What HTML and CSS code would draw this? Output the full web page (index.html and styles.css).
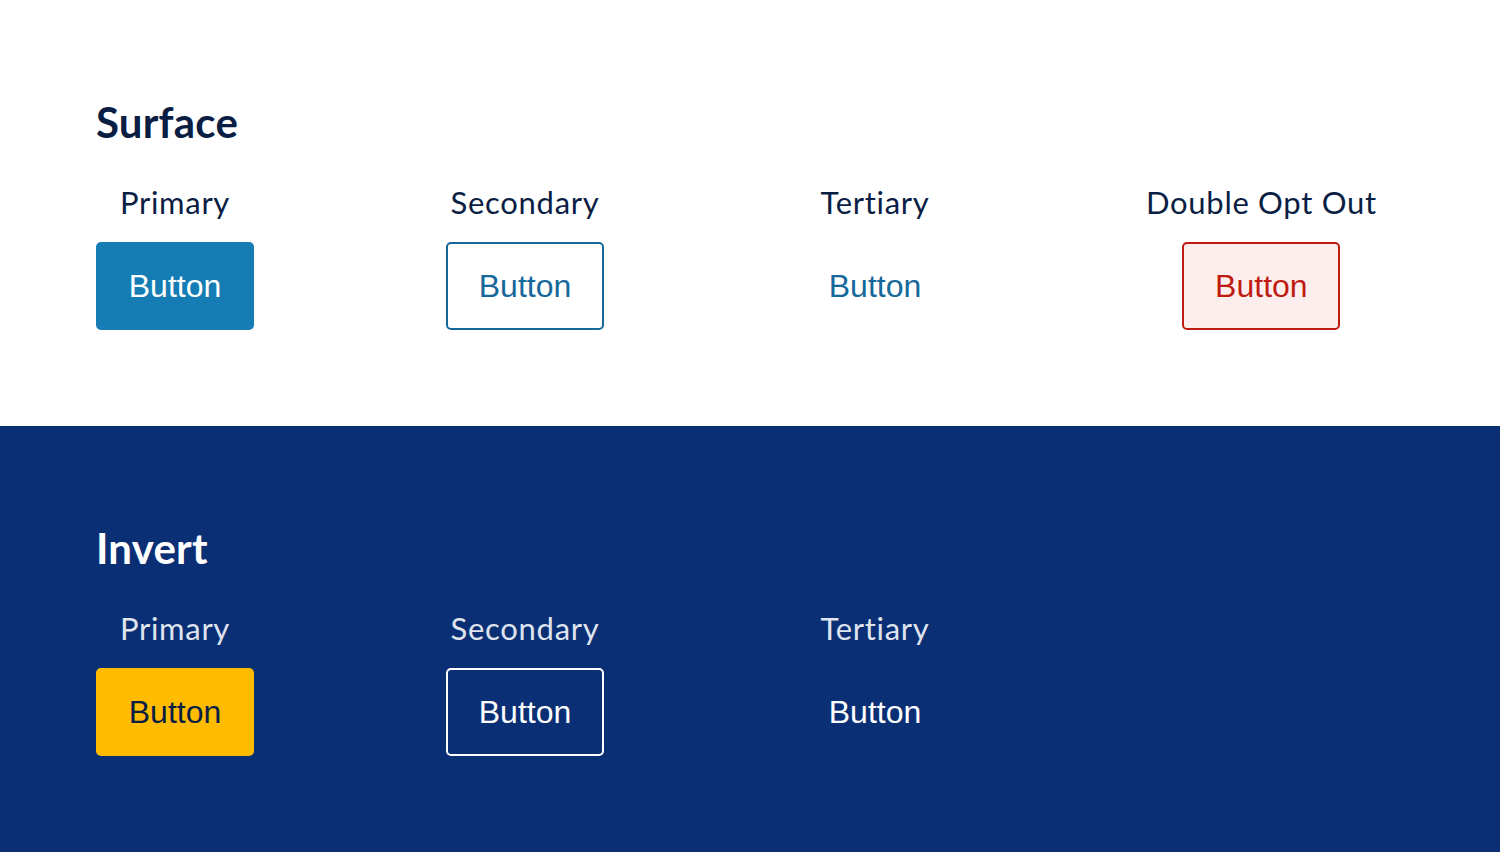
FILE: index.html
```html
<!DOCTYPE html>
<html>
<head>
	<meta charset="UTF-8">
	<title>Buttons</title>
	<link rel="stylesheet" href="styles.css">
</head>
<body>
	<div class="section surface">
		<h2>Surface</h2>
		<div class="row">
			<div class="col">
				<p class="label">Primary</p>
				<a class="btn primary">Button</a>
			</div>
			<div class="col">
				<p class="label">Secondary</p>
				<a class="btn secondary">Button</a>
			</div>
			<div class="col">
				<p class="label">Tertiary</p>
				<a class="btn tertiary">Button</a>
			</div>
			<div class="col">
				<p class="label">Double Opt Out</p>
				<a class="btn danger">Button</a>
			</div>
		</div>
	</div>
	<div class="section invert">
		<h2>Invert</h2>
		<div class="row">
			<div class="col">
				<p class="label">Primary</p>
				<a class="btn primary">Button</a>
			</div>
			<div class="col">
				<p class="label">Secondary</p>
				<a class="btn secondary">Button</a>
			</div>
			<div class="col">
				<p class="label">Tertiary</p>
				<a class="btn tertiary">Button</a>
			</div>
		</div>
	</div>
</body>
</html>
```

FILE: styles.css
```css
body{
	margin: 0;
	font-family: Lato, "Noto Sans", sans-serif;
}
.section{
	height: 426px;
	box-sizing: border-box;
	padding: 96px 96px 0;
}
.surface{
	background: #fff;
	color: #0a1e44;
}
.invert{
	background: #0b2f75;
	color: #fff;
}
h2{
	margin: 0 0 34px;
	font-size: 42px;
	line-height: 52px;
	font-weight: 700;
	letter-spacing: 0.2px;
}
.row{
	display: flex;
	gap: 192px;
}
.col{
	display: flex;
	flex-direction: column;
	align-items: center;
	min-width: 158px;
}
.label{
	margin: 0 0 20px;
	font-size: 31px;
	line-height: 40px;
	letter-spacing: 0.7px;
}
.invert .label{
	color: #dfe4ee;
}
.btn{
	display: flex;
	align-items: center;
	justify-content: center;
	width: 158px;
	height: 88px;
	box-sizing: border-box;
	border: 2px solid transparent;
	border-radius: 5px;
	font-family: "Liberation Sans", Arial, sans-serif;
	font-size: 32px;
}
.surface .primary{
	background: #157db4;
	color: #fff;
}
.surface .secondary{
	border-color: #16689a;
	color: #16689a;
}
.surface .tertiary{
	color: #16689a;
}
.danger{
	background: #fdeeed;
	border-color: #c01b12;
	color: #c01b12;
}
.invert .primary{
	background: #ffbb00;
	color: #0a1e44;
}
.invert .secondary{
	border-color: #fff;
	color: #fff;
}
.invert .tertiary{
	color: #fff;
}
```
